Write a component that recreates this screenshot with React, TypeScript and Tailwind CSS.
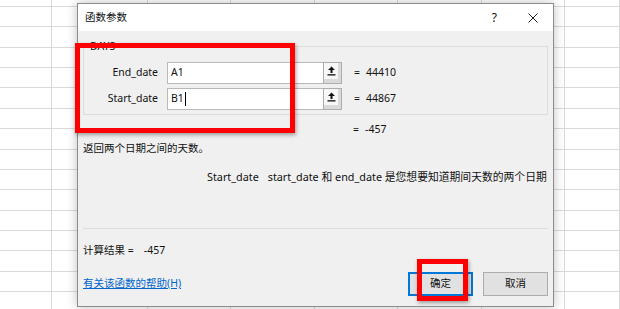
import React from 'react';

const colWidths = ['w-[52px]', 'w-[96px]', 'w-[83px]', 'w-[84px]', 'w-[83px]', 'w-[84px]', 'w-[83px]', 'flex-1'];

function SheetRow({ first = false }: { first?: boolean }) {
  return (
    <div className={`flex ${first ? 'h-[7px]' : 'h-[20.36px]'}`}>
      {colWidths.map((w, i) => (
        <div key={i} className={`${w} shrink-0 border-b border-r border-[#dadada]`} />
      ))}
    </div>
  );
}

function RefButton() {
  return (
    <div className="flex h-[22px] w-[19px] border border-[#adadad] bg-[#dadada]">
      <div className="flex h-[16px] w-[14px] items-center justify-center bg-[#f7f7f7]">
        <svg width="9" height="10" viewBox="0 0 9 10">
          <path d="M4.5 0.5 L8 4 L5.5 4 L5.5 7 L3.5 7 L3.5 4 L1 4 Z" fill="#111" />
          <rect x="0.5" y="8.2" width="8" height="1.3" fill="#111" />
        </svg>
      </div>
    </div>
  );
}

function ArgRow({ label, value, result, caret = false }: { label: string; value: string; result: string; caret?: boolean }) {
  return (
    <div className="flex h-[22px] items-center">
      <div className="w-[74px] text-right">{label}</div>
      <div className="ml-[9px] flex h-[22px] w-[156px] items-center border border-r-0 border-[#b9b9b9] bg-white pl-[3px]">
        {value}
        {caret && <span className="ml-[1px] inline-block h-[14px] w-px bg-black" />}
      </div>
      <RefButton />
      <div className="ml-[12px] w-[12px]">=</div>
      <div>{result}</div>
    </div>
  );
}

export default function App() {
  return (
    <div className="relative h-[309px] w-[620px] overflow-hidden bg-white font-['Noto_Sans','Noto_Sans_CJK_SC',sans-serif] text-[10.5px] text-[#111]">
      {/* spreadsheet grid behind the dialog */}
      <div className="flex flex-col">
        <SheetRow first />
        {Array.from({ length: 15 }).map((_, i) => (
          <SheetRow key={i} />
        ))}
      </div>

      {/* dialog window */}
      <div className="absolute left-[77px] top-[3px] flex w-[477px] flex-col border border-[#8c8c8c] bg-[#f0f0f0] shadow-[0_0_10px_rgba(0,0,0,0.25)]">
        <div className="flex h-[27px] items-center bg-white pl-[7px]">
          <span>函数参数</span>
          <span className="ml-auto text-[12px]">?</span>
          <svg className="ml-[31px] mr-[15px]" width="10" height="10" viewBox="0 0 10 10">
            <path d="M0.5 0.5 L9.5 9.5 M9.5 0.5 L0.5 9.5" stroke="#222" strokeWidth="1" />
          </svg>
        </div>

        <div className="flex flex-col px-[5px] pb-[10px]">
          {/* argument group box */}
          <div className="relative mt-[15px] flex flex-col gap-[4px] border border-[#dcdcdc] pb-[4px] pt-[15px]">
            <span className="absolute -top-[8px] left-[5px] bg-[#f0f0f0] px-[1px]">DAYS</span>
            <ArgRow label="End_date" value="A1" result="44410" />
            <ArgRow label="Start_date" value="B1" result="44867" caret />
          </div>

          <div className="mt-[6px] flex h-[18px] items-center pl-[270px]">
            <span className="w-[12px]">=</span>
            <span>-457</span>
          </div>

          <div className="mt-[1px] flex h-[18px] items-center">返回两个日期之间的天数。</div>

          <div className="mt-[10px] flex h-[18px] items-center pl-[124px] text-[10.8px]">
            <span className="mr-[9px]">Start_date</span>
            <span>start_date 和 end_date 是您想要知道期间天数的两个日期</span>
          </div>

          <div className="mt-[42px] h-px bg-[#dcdcdc]" />

          <div className="mt-[13px] flex h-[18px] items-center">
            <span>计算结果 =</span>
            <span className="ml-[10px]">-457</span>
          </div>

          <div className="mt-[12px] flex h-[24px] items-center">
            <a className="text-[#0066cc] underline">有关该函数的帮助(H)</a>
            <button className="ml-auto h-[24px] w-[65px] border-2 border-[#0078d7] bg-[#e1e1e1]">确定</button>
            <button className="ml-[10px] h-[24px] w-[65px] border border-[#adadad] bg-[#e1e1e1]">取消</button>
          </div>
        </div>
      </div>

      {/* red annotation frames */}
      <div className="absolute left-[75px] top-[43px] h-[90px] w-[220px] border-[5px] border-[#ff0000] shadow-[1px_2px_4px_rgba(0,0,0,0.35)]" />
      <div className="absolute left-[417px] top-[259px] h-[42px] w-[51px] border-[5px] border-[#ff0000] shadow-[1px_2px_4px_rgba(0,0,0,0.35)]" />
    </div>
  );
}
